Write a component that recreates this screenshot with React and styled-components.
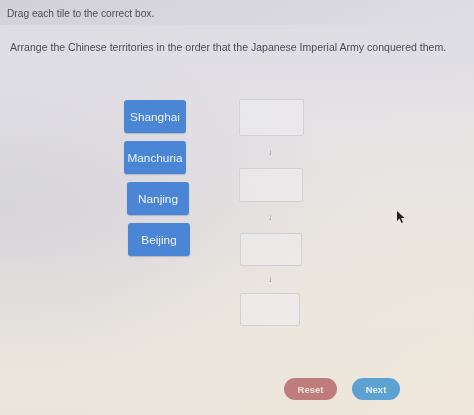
import React from "react";
import styled, { createGlobalStyle } from "styled-components";

const Global = createGlobalStyle`
  html, body { margin: 0; padding: 0; }
  body { font-family: "Liberation Sans", Arial, sans-serif; }
`;

const Screen = styled.div`
  position: relative;
  width: 474px;
  height: 415px;
  overflow: hidden;
  background:
    radial-gradient(ellipse at 100% 100%, rgba(240,232,220,0.9) 0%, rgba(240,232,220,0) 60%),
    radial-gradient(ellipse at 0% 50%, rgba(200,200,210,0.55) 0%, rgba(200,200,210,0) 55%),
    linear-gradient(180deg, #dcdbe3 0%, #e4e2e6 30%, #e9e5e0 70%, #ebe4da 100%);
  filter: blur(0.35px);
  display: flex;
  flex-direction: column;
`;

const TopBar = styled.div`
  height: 25px;
  padding: 8px 0 0 7px;
  box-sizing: border-box;
  font-size: 10.2px;
  color: #4d4d58;
  background: linear-gradient(90deg, rgba(190,190,200,0.35), rgba(230,228,236,0.1));
`;

const Prompt = styled.div`
  padding: 16px 0 0 10px;
  font-size: 10.55px;
  color: #4a4a5a;
`;

const Board = styled.div`
  display: flex;
  padding: 46px 0 0 124px;
  gap: 49px;
`;

const TileColumn = styled.div`
  display: flex;
  flex-direction: column;
  gap: 8px;
  padding-top: 1px;
`;

const Tile = styled.div`
  width: 62px;
  height: 33px;
  margin-left: ${(p) => p.$shift || 0}px;
  border-radius: 3px;
  background: #4b86d6;
  color: #eef3fb;
  font-size: 11.8px;
  display: flex;
  align-items: center;
  justify-content: center;
  box-shadow: 0 1px 1px rgba(40, 60, 110, 0.25);
`;

const BoxColumn = styled.div`
  display: flex;
  flex-direction: column;
  align-items: flex-start;
`;

const DropBox = styled.div`
  width: ${(p) => p.$w}px;
  height: ${(p) => p.$h}px;
  margin-left: ${(p) => p.$shift || 0}px;
  border: 1px solid #d2d2d6;
  border-radius: 2px;
  background: rgba(238, 236, 238, 0.6);
  box-sizing: border-box;
`;

const Arrow = styled.div`
  height: ${(p) => p.$h}px;
  width: 62px;
  display: flex;
  align-items: center;
  justify-content: center;
  font-size: 8px;
  color: #777;
`;

const Actions = styled.div`
  display: flex;
  gap: 15px;
  padding: 52px 0 0 284px;
`;

const Pill = styled.div`
  width: ${(p) => p.$w}px;
  height: 22px;
  border-radius: 11px;
  background: ${(p) => p.$bg};
  color: ${(p) => p.$fg};
  font-size: 9.5px;
  font-weight: bold;
  display: flex;
  align-items: center;
  justify-content: center;
`;

const Cursor = styled.svg`
  position: absolute;
  left: 396px;
  top: 210px;
`;

export default function App() {
  return (
    <>
      <Global />
      <Screen>
        <TopBar>Drag each tile to the correct box.</TopBar>
        <Prompt>
          Arrange the Chinese territories in the order that the Japanese Imperial Army conquered them.
        </Prompt>
        <Board>
          <TileColumn>
            <Tile>Shanghai</Tile>
            <Tile>Manchuria</Tile>
            <Tile $shift={3}>Nanjing</Tile>
            <Tile $shift={4}>Beijing</Tile>
          </TileColumn>
          <BoxColumn>
            <DropBox $w={65} $h={37} />
            <Arrow $h={32}>↓</Arrow>
            <DropBox $w={64} $h={34} />
            <Arrow $h={31}>↓</Arrow>
            <DropBox $w={62} $h={33} $shift={1} />
            <Arrow $h={27}>↓</Arrow>
            <DropBox $w={60} $h={33} $shift={1} />
          </BoxColumn>
        </Board>
        <Actions>
          <Pill $w={53} $bg="#bf7c7c" $fg="#f3dede">Reset</Pill>
          <Pill $w={48} $bg="#5ea2d4" $fg="#e6f1fa">Next</Pill>
        </Actions>
        <Cursor width="10" height="14" viewBox="0 0 10 14">
          <path d="M1 1 L1 11 L3.5 8.5 L5.5 13 L7 12.3 L5 8 L8.5 8 Z" fill="#222" />
        </Cursor>
      </Screen>
    </>
  );
}
